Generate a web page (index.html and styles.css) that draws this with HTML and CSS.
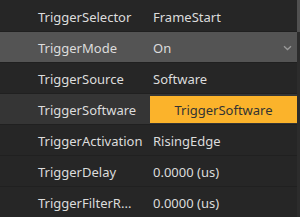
FILE: index.html
```html
<!DOCTYPE html>
<html>
<head>
<meta charset="utf-8">
<link rel="stylesheet" href="styles.css">
</head>
<body>
<div class="panel">
  <div class="list">
    <div class="row"><div class="label">TriggerSelector</div><div class="value">FrameStart</div></div>
    <div class="row selected"><div class="label">TriggerMode</div><div class="value combo">On<svg class="chev" width="9" height="6" viewBox="0 0 9 6"><path d="M1 1.2 L4.5 4.5 L8 1.2" fill="none" stroke="#9a9a9a" stroke-width="1.3"/></svg></div></div>
    <div class="row"><div class="label">TriggerSource</div><div class="value">Software</div></div>
    <div class="row alt"><div class="label">TriggerSoftware</div><div class="value"><div class="btn">TriggerSoftware</div></div></div>
    <div class="row"><div class="label">TriggerActivation</div><div class="value">RisingEdge</div></div>
    <div class="row"><div class="label">TriggerDelay</div><div class="value">0.0000 (us)</div></div>
    <div class="row"><div class="label">TriggerFilterR...</div><div class="value">0.0000 (us)</div></div>
  </div>
  <div class="scrollbar"><div class="thumb"></div></div>
</div>
</body>
</html>
```
FILE: styles.css
```css
html, body {
  margin: 0;
  padding: 0;
  background: #262626;
}
body {
  width: 300px;
  height: 217px;
  overflow: hidden;
  font-family: "Noto Sans", "Open Sans", sans-serif;
  font-size: 13px;
  color: #dcdcdc;
}
.panel {
  display: flex;
  height: 217px;
}
.list {
  flex: 1;
  padding-top: 1px;
}
.row {
  display: flex;
  align-items: center;
  height: 29px;
  border-bottom: 1px solid #202020;
  padding-top: 1px;
  box-sizing: content-box;
}
.row.selected {
  background: #545454;
}
.row.alt {
  background: #353535;
}
.label {
  width: 150px;
  padding-left: 38px;
  box-sizing: border-box;
  white-space: nowrap;
}
.value {
  flex: 1;
  padding-left: 3px;
  height: 100%;
  display: flex;
  align-items: center;
}
.combo {
  justify-content: space-between;
  padding-right: 5px;
}
.row.alt .value {
  padding: 1px 0 1px 0;
  box-sizing: border-box;
}
.btn {
  width: 100%;
  height: 100%;
  background: #fbb32b;
  color: #333333;
  display: flex;
  align-items: center;
  justify-content: center;
}
.scrollbar {
  width: 3px;
  background: #2c2c2c;
}
.thumb {
  height: 32px;
  background: #505050;
}
```
